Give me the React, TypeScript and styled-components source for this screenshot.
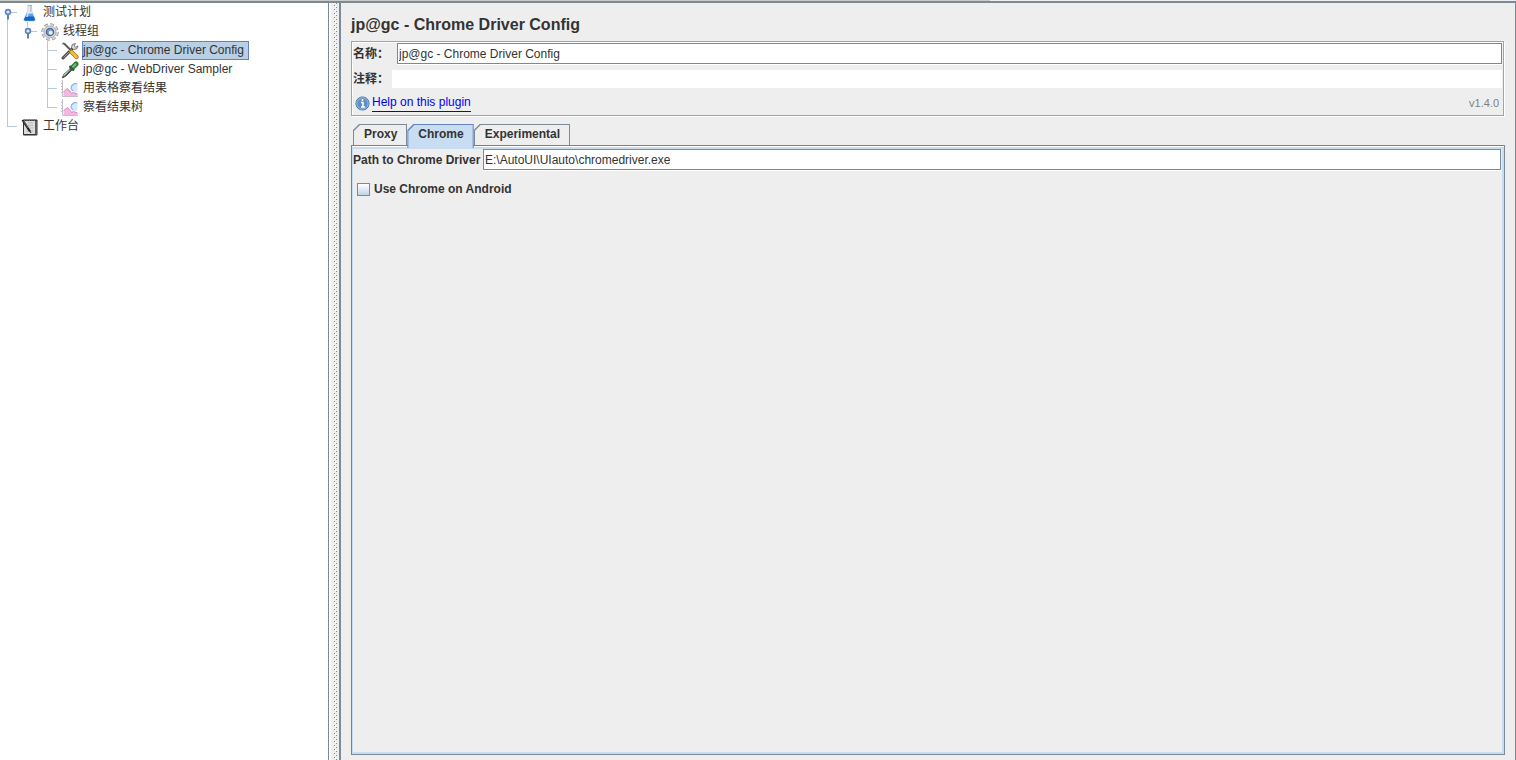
import React, { useState } from "react";
import styled, { createGlobalStyle, css } from "styled-components";

const SLATE = "#7a8a99";
const PANEL = "#eeeeee";
const SKY = "#c8ddf2";
const TREE_LINE = "#b0c8e0";

const GlobalStyle = createGlobalStyle`
  * { box-sizing: border-box; }
  body {
    margin: 0;
    background: ${PANEL};
    color: #333333;
    font: 12px/16px "Liberation Sans", "Noto Sans CJK SC", sans-serif;
  }
  button, input { font: inherit; color: inherit; }
`;

const Window = styled.div`
  display: flex;
  flex-direction: column;
  min-height: 100vh;
`;

const ToolbarEdge = styled.div`
  height: 3px;
  border-bottom: 2px solid ${SLATE};
  background: ${PANEL};
  &::before {
    content: "";
    display: block;
    width: 65.3%;
    height: 1px;
    background: #ccccc4;
  }
`;

const Split = styled.div`
  display: grid;
  grid-template-columns: 329px 10px minmax(0, 1fr);
  flex: 1;
`;

const TreePane = styled.nav`
  background: #ffffff;
  border-right: 1px solid ${SLATE};
`;

const dot = (color: string) =>
  `linear-gradient(${color} 1px, transparent 1px)`;

const Divider = styled.div`
  border-left: 2px solid #ffffff;
  background-color: ${PANEL};
  background-image: ${dot(SLATE)}, ${dot(SLATE)}, ${dot("#ffffff")}, ${dot("#ffffff")};
  background-size: 1px 4px;
  background-repeat: repeat-y;
  background-position: 3px 2px, 5px 0, 2px 1px, 4px 3px;
`;

const TreeList = styled.ul`
  list-style: none;
  margin: 0;
  padding: 0;
`;

const TreeRow = styled.li`
  display: flex;
  align-items: center;
  height: 19px;
`;

type Joint = "blank" | "pass" | "tee" | "end" | "root" | "handle";

const vertical: Record<Joint, string> = {
  blank: "0 0",
  pass: "1px 19px",
  tee: "1px 19px",
  end: "1px 10px",
  root: "1px 19px",
  handle: "1px 5px",
};

const Gutter = styled.span<{ $joint: Joint }>`
  display: flex;
  flex: none;
  width: 20px;
  height: 19px;
  padding: 5px 0 0 4px;
  background-repeat: no-repeat;
  background-image: linear-gradient(${TREE_LINE}, ${TREE_LINE}),
    linear-gradient(${TREE_LINE}, ${TREE_LINE});
  background-size: ${(p) => vertical[p.$joint]},
    ${(p) => (p.$joint === "blank" || p.$joint === "pass" ? "0 0" : "9px 1px")};
  background-position: 7px ${(p) => (p.$joint === "root" ? "10px" : "0")}, 8px 9px;
`;

const IconSlot = styled.span`
  display: flex;
  flex: none;
  width: 22px;
  padding-left: 1px;
`;

const NodeButton = styled.button<{ $selected: boolean }>`
  height: 19px;
  padding: 0 4px 1px 0;
  border: 1px solid ${(p) => (p.$selected ? "#6382bf" : "transparent")};
  background: ${(p) => (p.$selected ? "#b8cfe5" : "transparent")};
  line-height: 16px;
  white-space: nowrap;
`;

const Editor = styled.main`
  display: flex;
  flex-direction: column;
  min-width: 0;
  padding: 12px 10px 5px;
  border-left: 2px solid ${SLATE};
  border-right: 1px solid ${SLATE};
`;

const Title = styled.h1`
  margin: 0 0 6px;
  font-size: 16px;
  line-height: 20px;
`;

const Details = styled.section`
  border: 1px solid #a3a3a3;
  margin-right: 1px;
  padding: 1px;
  box-shadow: 1px 1px #ffffff, inset 1px 1px #ffffff;
`;

const NameRow = styled.div`
  display: flex;
  align-items: center;
  height: 21px;
`;

const CommentRow = styled(NameRow)`
  height: 18px;
  margin-top: 6px;
`;

const FieldLabel = styled.label<{ $width: number }>`
  flex: none;
  width: ${(p) => p.$width}px;
  font-weight: bold;
  white-space: nowrap;
`;

const fieldBase = css`
  flex: 1;
  min-width: 0;
  margin: 0;
  background: #ffffff;
  outline: 0;
  border-radius: 0;
`;

const Field = styled.input`
  ${fieldBase}
  height: 21px;
  padding: 0 1px;
  border: 1px solid ${SLATE};
  box-shadow: 0 1px #ffffff;
`;

const PlainField = styled.input`
  ${fieldBase}
  height: 18px;
  padding: 0 2px;
  border: 0;
`;

const HelpRow = styled.div`
  display: flex;
  align-items: center;
  height: 26px;
  padding: 4px 3px 0 2px;
`;

const HelpLink = styled.a`
  margin: 0 auto 0 2px;
  line-height: 17px;
  color: #0000ff;
  text-decoration: none;
  border-bottom: 1px solid #0000ff;
`;

const Version = styled.span`
  font-size: 11px;
  color: #808080;
`;

const TabStrip = styled.div`
  display: flex;
  margin-top: 8px;
  padding-left: 2px;
`;

const Tab = styled.button<{ $active: boolean }>`
  position: relative;
  z-index: 0;
  height: 21px;
  padding: 0 10px 1px 11px;
  border: 0;
  background: ${(p) => (p.$active ? "#6382bf" : SLATE)};
  clip-path: polygon(0 6px, 6px 0, 100% 0, 100% 100%, 0 100%);
  font-weight: bold;
  &::before {
    content: "";
    position: absolute;
    z-index: -1;
    inset: 1px 1px 0;
    background: ${(p) => (p.$active ? SKY : PANEL)};
    clip-path: polygon(0 6px, 6px 0, 100% 0, 100% 100%, 0 100%);
  }
  ${(p) =>
    p.$active &&
    css`
      z-index: 1;
      height: 24px;
      margin-bottom: -3px;
      padding-bottom: 4px;
    `}
`;

const TabPanel = styled.section`
  flex: 1;
  border: 1px solid ${SLATE};
  border-top-color: #6382bf;
  border-left-color: #6382bf;
  box-shadow: inset 0 1px #ffffff, inset 0 3px ${SKY}, inset 1px 0 ${SKY}, inset -2px -2px ${SKY};
  padding: 3px 3px 3px 1px;
`;

const PathRow = styled.div`
  display: flex;
  align-items: center;
  height: 21px;
`;

const CheckRow = styled.label`
  display: flex;
  align-items: center;
  gap: 4px;
  width: max-content;
  margin-top: 11px;
  padding-left: 4px;
  font-weight: bold;
`;

const Checkbox = styled.input`
  appearance: none;
  width: 13px;
  height: 13px;
  margin: 1px 0 0;
  border: 1px solid ${SLATE};
  background: linear-gradient(#ffffff, #c0d4e8);
  &:checked { background: ${SLATE}; }
`;

const Handle = () => (
  <svg width="8" height="12" viewBox="0 0 8 12">
    <path d="M4 6v5.500" stroke="#5f82bd" strokeWidth="2" />
    <circle cx="4" cy="4" r="2.400" fill="#dfeaf5" stroke="#5f82bd" strokeWidth="1.600" />
  </svg>
);

const FlaskIcon = () => (
  <svg width="17" height="18" viewBox="0 0 17 18">
    <path d="M7 1.500h3.500l.5 6 3.500 8.500-1 1h-10l-1-1L6.500 7.500z" fill="#e9eef4" stroke="#c3ccd6" strokeWidth=".7" />
    <path d="M5.600 9.500h6L14 15.500l-.8 1.200H3.800L3 15.500z" fill="#5fa4ea" />
    <path d="M4.500 12.500h8.200l1.300 3-.8 1.300H3.800L3 15.500z" fill="#1465c8" />
    <path d="M7.600 8.500l-1.800 4.500" stroke="#d2e8fb" strokeWidth="1.400" />
    <path d="M6.500 1.500h4.500M9.800 2v6" stroke="#a3adb8" strokeWidth=".9" />
  </svg>
);

const GearIcon = () => (
  <svg width="18" height="18" viewBox="0 0 18 18">
    <circle cx="9" cy="9" r="7.500" fill="none" stroke="#9c9c9c" strokeWidth="2.600" strokeDasharray="3.700 2.190" />
    <circle cx="9" cy="9" r="7" fill="none" stroke="#d6d6d6" strokeWidth="2" strokeDasharray="3 2.500" />
    <circle cx="9" cy="9" r="6" fill="#dddddd" stroke="#a0a0a0" strokeWidth=".8" />
    <circle cx="9" cy="9" r="3.600" fill="#7e9bcb" stroke="#4a669b" strokeWidth="1.400" />
    <circle cx="9.700" cy="9.700" r="2" fill="#e6effc" />
  </svg>
);

const ToolsIcon = () => (
  <svg width="18" height="18" viewBox="0 0 18 18">
    <path d="M2 16L12 6" stroke="#4a4a4a" strokeWidth="3" strokeLinecap="round" />
    <path d="M2.500 15.500l9-9" stroke="#a4a4a4" />
    <path d="M14.500 1.500l-3.200 1-.8 3 2 2 3.200-.6 1.300-3-2.500 1.200-1.300-1.300z" fill="#d8d8d8" stroke="#6a6a6a" strokeWidth=".9" />
    <path d="M1.500 1.500l2 .5L10 8.500" fill="none" stroke="#5c5c5c" strokeWidth="2" />
    <path d="M2 2l7 7" stroke="#cecece" strokeWidth=".7" />
    <path d="M10.500 10l5 5" stroke="#a97613" strokeWidth="4.200" strokeLinecap="round" />
    <path d="M10.500 10l5 5" stroke="#f4c33b" strokeWidth="2.600" strokeLinecap="round" />
  </svg>
);

const DropperIcon = () => (
  <svg width="18" height="18" viewBox="0 0 18 18">
    <path d="M10 7l1.500 1.500L5 15l-3.800 2L3 13z" fill="#dde1dd" stroke="#6b716b" />
    <path d="M1.500 16.500L4 15l7-7" fill="none" stroke="#424742" strokeWidth="1.200" />
    <path d="M11 7l4-4" stroke="#2f7538" strokeWidth="5" strokeLinecap="round" />
    <path d="M11.500 6.200l3-3" stroke="#74bd7b" strokeWidth="2" strokeLinecap="round" />
    <path d="M8.500 5l4.500 4.500" stroke="#285e30" strokeWidth="2" />
  </svg>
);

const ChartIcon = () => (
  <svg width="18" height="17" viewBox="0 0 18 17">
    <path d="M1.500 0v16.500H17" fill="none" stroke="#c4bccb" />
    <path d="M0 3.500h1M0 6.500h1M0 9.500h1M0 12.500h1" stroke="#c4bccb" />
    <path d="M16.500 4.500v7l-3 .5-3-2.500V6l2-2.200z" fill="#d5e8ff" />
    <path d="M16.500 4l-3-.5-2.800 2.200-.7 3 2 2.500" fill="none" stroke="#87b4f3" strokeWidth="1.200" />
    <path d="M2.500 16v-4L6 8.500l2.500 2 2 3 2-1 4 1.500v2z" fill="#f5b6e1" />
    <path d="M2.500 12L6 8.500l2.500 2 2 3 2-1 4 1.500" fill="none" stroke="#dc83c4" />
  </svg>
);

const NotebookIcon = () => (
  <svg width="18" height="18" viewBox="0 0 18 18">
    <rect x="2" y="1.500" width="14.500" height="16" rx="1" fill="#343434" />
    <path d="M3 3h11v13H3z" fill="#dcdcdc" />
    <path d="M15 3v13.500" stroke="#858585" />
    <path d="M7 5h5M7 7.500h5M8 10h4M5 13h7" stroke="#bdbdbd" />
    <path d="M3.500 1v2M6 1v2M8.500 1v2M11 1v2M13.500 1v2" stroke="#777777" />
    <path d="M1.500 2L9 13.500" stroke="#222222" strokeWidth="2.200" />
    <path d="M2.500 3l4.500 7" stroke="#777777" strokeWidth=".7" />
    <path d="M8.500 12.500l1.500 2.500" stroke="#222222" />
  </svg>
);

const InfoIcon = () => (
  <svg width="15" height="15" viewBox="0 0 15 15">
    <circle cx="7.500" cy="7.500" r="6.600" fill="#5c90c9" stroke="#5b7a9e" />
    <circle cx="7.500" cy="7.500" r="5.600" fill="none" stroke="#a5c4e3" strokeWidth=".8" />
    <path d="M6 6.500h2V11M6 11h4" fill="none" stroke="#ffffff" strokeWidth="1.500" />
    <circle cx="7.500" cy="4" r="1.100" fill="#ffffff" />
  </svg>
);

type Node = { label: string; joints: Joint[]; icon: () => React.JSX.Element; open?: boolean };

const nodes: Node[] = [
  { label: "测试计划", joints: ["root"], icon: FlaskIcon, open: true },
  { label: "线程组", joints: ["pass", "handle"], icon: GearIcon, open: true },
  { label: "jp@gc - Chrome Driver Config", joints: ["pass", "blank", "tee"], icon: ToolsIcon },
  { label: "jp@gc - WebDriver Sampler", joints: ["pass", "blank", "tee"], icon: DropperIcon },
  { label: "用表格察看结果", joints: ["pass", "blank", "tee"], icon: ChartIcon },
  { label: "察看结果树", joints: ["pass", "blank", "end"], icon: ChartIcon },
  { label: "工作台", joints: ["end"], icon: NotebookIcon },
];

const tabs = ["Proxy", "Chrome", "Experimental"];

export default function App() {
  const [selected, setSelected] = useState(2);
  const [tab, setTab] = useState("Chrome");

  return (
    <Window>
      <GlobalStyle />
      <ToolbarEdge />
      <Split>
        <TreePane>
          <TreeList>
            {nodes.map(({ label, joints, icon: Icon, open }, i) => (
              <TreeRow key={label}>
                {joints.map((joint, depth) => (
                  <Gutter key={depth} $joint={joint}>
                    {open && depth === joints.length - 1 && <Handle />}
                  </Gutter>
                ))}
                <IconSlot><Icon /></IconSlot>
                <NodeButton $selected={selected === i} onClick={() => setSelected(i)}>
                  {label}
                </NodeButton>
              </TreeRow>
            ))}
          </TreeList>
        </TreePane>
        <Divider />
        <Editor>
          <Title>jp@gc - Chrome Driver Config</Title>
          <Details>
            <NameRow>
              <FieldLabel htmlFor="name" $width={44}>名称：</FieldLabel>
              <Field id="name" defaultValue="jp@gc - Chrome Driver Config" />
            </NameRow>
            <CommentRow>
              <FieldLabel htmlFor="comment" $width={39}>注释：</FieldLabel>
              <PlainField id="comment" />
            </CommentRow>
            <HelpRow>
              <InfoIcon />
              <HelpLink href="#help">Help on this plugin</HelpLink>
              <Version>v1.4.0</Version>
            </HelpRow>
          </Details>
          <TabStrip role="tablist">
            {tabs.map((name) => (
              <Tab
                key={name}
                role="tab"
                aria-selected={tab === name}
                $active={tab === name}
                onClick={() => setTab(name)}
              >
                {name}
              </Tab>
            ))}
          </TabStrip>
          <TabPanel role="tabpanel">
            <PathRow>
              <FieldLabel htmlFor="path" $width={130}>Path to Chrome Driver</FieldLabel>
              <Field id="path" defaultValue="E:\AutoUI\UIauto\chromedriver.exe" />
            </PathRow>
            <CheckRow>
              <Checkbox type="checkbox" />
              Use Chrome on Android
            </CheckRow>
          </TabPanel>
        </Editor>
      </Split>
    </Window>
  );
}
